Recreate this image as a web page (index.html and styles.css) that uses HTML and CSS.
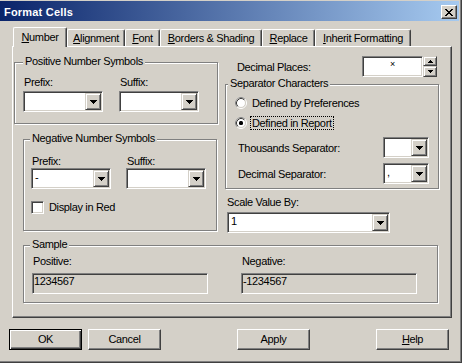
FILE: index.html
```html
<!DOCTYPE html>
<html>
<head>
<meta charset="utf-8">
<link rel="stylesheet" href="styles.css">
</head>
<body>
<div class="window">
  <div class="titlebar">
    <span class="title">Format Cells</span>
    <span class="close"><svg width="8" height="7" shape-rendering="crispEdges"><path d="M0 0h2v1H0zM6 0h2v1H6zM1 1h2v1H1zM5 1h2v1H5zM2 2h4v1H2zM3 3h2v1H3zM2 4h4v1H2zM1 5h2v1H1zM5 5h2v1H5zM0 6h2v1H0zM6 6h2v1H6z"/></svg></span>
  </div>

  <div class="tabs">
    <div class="tab sel t-num"><u>N</u>umber</div>
    <div class="tab t-align"><u>A</u>lignment</div>
    <div class="tab t-font"><u>F</u>ont</div>
    <div class="tab t-border"><u>B</u>orders &amp; Shading</div>
    <div class="tab t-replace"><u>R</u>eplace</div>
    <div class="tab t-inherit"><u>I</u>nherit Formatting</div>
  </div>

  <div class="panel">
    <div class="top">
      <div class="col-left">
        <div class="group pos">
          <div class="legend">Positive Number Symbols</div>
          <div class="fields">
            <div class="field">
              <div class="lbl">Prefix:</div>
              <div class="combo w80"><span class="val"></span><span class="drop"><svg width="7" height="4" shape-rendering="crispEdges"><path d="M0 0h7v1H0zM1 1h5v1H1zM2 2h3v1H2zM3 3h1v1H3z"/></svg></span></div>
            </div>
            <div class="field">
              <div class="lbl">Suffix:</div>
              <div class="combo w80"><span class="val"></span><span class="drop"><svg width="7" height="4" shape-rendering="crispEdges"><path d="M0 0h7v1H0zM1 1h5v1H1zM2 2h3v1H2zM3 3h1v1H3z"/></svg></span></div>
            </div>
          </div>
        </div>

        <div class="group neg">
          <div class="legend">Negative Number Symbols</div>
          <div class="fields">
            <div class="field">
              <div class="lbl">Prefix:</div>
              <div class="combo w80"><span class="val">-</span><span class="drop"><svg width="7" height="4" shape-rendering="crispEdges"><path d="M0 0h7v1H0zM1 1h5v1H1zM2 2h3v1H2zM3 3h1v1H3z"/></svg></span></div>
            </div>
            <div class="field">
              <div class="lbl">Suffix:</div>
              <div class="combo w80"><span class="val"></span><span class="drop"><svg width="7" height="4" shape-rendering="crispEdges"><path d="M0 0h7v1H0zM1 1h5v1H1zM2 2h3v1H2zM3 3h1v1H3z"/></svg></span></div>
            </div>
          </div>
          <div class="check-row"><span class="checkbox"></span><span>Display in Red</span></div>
        </div>
      </div>

      <div class="col-right">
        <div class="dec-row">
          <span>Decimal Places:</span>
          <div class="spin">
            <div class="edit-num">×</div>
            <div class="spin-btns">
              <span class="spin-btn up"><svg width="5" height="3" shape-rendering="crispEdges"><path d="M2 0h1v1H2zM1 1h3v1H1zM0 2h5v1H0z"/></svg></span>
              <span class="spin-btn down"><svg width="5" height="3" shape-rendering="crispEdges"><path d="M0 0h5v1H0zM1 1h3v1H1zM2 2h1v1H2z"/></svg></span>
            </div>
          </div>
        </div>

        <div class="group sep">
          <div class="legend">Separator Characters</div>
          <div class="radio-row first">
            <svg class="radio" width="12" height="12"><circle cx="6" cy="6" r="5.5" fill="none" stroke="#fff"/><path d="M2.11 9.89A5.5 5.5 0 0 1 9.89 2.11" fill="none" stroke="#808080"/><circle cx="6" cy="6" r="4.5" fill="#fff" stroke="#d4d0c8"/><path d="M2.82 9.18A4.5 4.5 0 0 1 9.18 2.82" fill="none" stroke="#404040"/></svg>
            <span>Defined by Preferences</span>
          </div>
          <div class="radio-row">
            <svg class="radio" width="12" height="12"><circle cx="6" cy="6" r="5.5" fill="none" stroke="#fff"/><path d="M2.11 9.89A5.5 5.5 0 0 1 9.89 2.11" fill="none" stroke="#808080"/><circle cx="6" cy="6" r="4.5" fill="#fff" stroke="#d4d0c8"/><path d="M2.82 9.18A4.5 4.5 0 0 1 9.18 2.82" fill="none" stroke="#404040"/><rect x="4" y="4" width="4" height="4" rx="1.5" fill="#000"/></svg>
            <span class="focus">Defined in Report</span>
          </div>
          <div class="sep-row r1">
            <span>Thousands Separator:</span>
            <div class="combo w46"><span class="val"></span><span class="drop"><svg width="7" height="4" shape-rendering="crispEdges"><path d="M0 0h7v1H0zM1 1h5v1H1zM2 2h3v1H2zM3 3h1v1H3z"/></svg></span></div>
          </div>
          <div class="sep-row r2">
            <span>Decimal Separator:</span>
            <div class="combo w46"><span class="val">,</span><span class="drop"><svg width="7" height="4" shape-rendering="crispEdges"><path d="M0 0h7v1H0zM1 1h5v1H1zM2 2h3v1H2zM3 3h1v1H3z"/></svg></span></div>
          </div>
        </div>

        <div class="lbl scale-lbl">Scale Value By:</div>
        <div class="combo scale-combo"><span class="val">1</span><span class="drop"><svg width="7" height="4" shape-rendering="crispEdges"><path d="M0 0h7v1H0zM1 1h5v1H1zM2 2h3v1H2zM3 3h1v1H3z"/></svg></span></div>
      </div>
    </div>

    <div class="group sample">
      <div class="legend">Sample</div>
      <div class="fields">
        <div class="field">
          <div class="lbl">Positive:</div>
          <div class="textbox">1234567</div>
        </div>
        <div class="field">
          <div class="lbl">Negative:</div>
          <div class="textbox">-1234567</div>
        </div>
      </div>
    </div>
  </div>

  <div class="buttons">
    <div class="btn default">OK</div>
    <div class="btn cancel">Cancel</div>
    <div class="btn apply">Apply</div>
    <div class="btn help"><u>H</u>elp</div>
  </div>
</div>
</body>
</html>
```

FILE: styles.css
```css
* { box-sizing: border-box; }
html, body { margin: 0; padding: 0; }
body {
  width: 462px;
  height: 363px;
  overflow: hidden;
  background: #d4d0c8;
  font-family: "Liberation Sans", Arial, sans-serif;
  font-size: 11px;
  letter-spacing: -0.35px;
  color: #000;
}
svg { display: block; }

.window {
  width: 462px;
  height: 363px;
  background: #d4d0c8;
  border-right: 1px solid #404040;
  border-bottom: 1px solid #404040;
  box-shadow: inset -1px -1px #808080;
  padding-top: 1px;
  display: flex;
  flex-direction: column;
}

.titlebar {
  height: 20px;
  margin-right: 2px;
  background: linear-gradient(to right, #0a246a, #a6caf0);
  display: flex;
  align-items: center;
  justify-content: space-between;
  padding: 0 2px 0 4px;
  color: #fff;
  font-weight: bold;
  letter-spacing: 0.2px;
}
.title { padding-top: 2px; }
.close {
  width: 16px;
  height: 14px;
  margin-top: 2px;
  background: #d4d0c8;
  border: 1px solid;
  border-color: #fff #404040 #404040 #fff;
  box-shadow: inset -1px -1px #808080;
  display: flex;
  align-items: center;
  justify-content: center;
}

.tabs {
  display: flex;
  align-items: flex-end;
  height: 19px;
  margin: 6px 0 0 13px;
}
.tab {
  height: 17px;
  background: #d4d0c8;
  border-top: 1px solid #fff;
  border-left: 1px solid #fff;
  border-right: 1px solid #404040;
  box-shadow: inset -1px 0 #808080;
  border-radius: 2px 2px 0 0;
  text-align: center;
  line-height: 16px;
  white-space: nowrap;
}
.tab.sel {
  height: 20px;
  margin-bottom: -1px;
  padding-top: 1px;
  position: relative;
  z-index: 1;
}
.t-num { width: 54px; }
.t-align { width: 58px; }
.t-font { width: 35px; }
.t-border { width: 102px; }
.t-replace { width: 53px; }
.t-inherit { width: 96px; }

.panel {
  margin-left: 12px;
  width: 440px;
  height: 272px;
  border-top: 1px solid #fff;
  border-left: 1px solid #fff;
  border-right: 1px solid #404040;
  border-bottom: 1px solid #404040;
  box-shadow: inset -1px -1px #808080;
  padding: 0 0 0 1px;
}

.top { display: flex; align-items: flex-start; }
.col-left { width: 204px; display: flex; flex-direction: column; }
.col-right { width: 214px; margin-left: 7px; display: flex; flex-direction: column; }

.group {
  border: 1px solid #808080;
  box-shadow: inset 1px 1px #fff, 1px 1px #fff;
}
.legend {
  width: fit-content;
  margin-top: -8px;
  padding: 0 2px;
  background: #d4d0c8;
  line-height: 13px;
  white-space: nowrap;
}
.lbl { line-height: 13px; padding-left: 1px; white-space: nowrap; }
.fields { display: flex; }

.pos { width: 204px; height: 62px; margin-top: 15px; padding-left: 8px; }
.pos .fields { gap: 16px; margin-top: 8px; }
.pos .combo { margin-top: 2px; }

.neg { width: 194px; height: 92px; margin: 15px 0 0 9px; padding-left: 7px; }
.neg .legend { margin-left: -1px; }
.neg .fields { gap: 15px; margin-top: 10px; }

.check-row { display: flex; align-items: center; gap: 5px; margin-top: 12px; line-height: 13px; }
.checkbox {
  width: 13px;
  height: 13px;
  background: #fff;
  border: 1px solid;
  border-color: #808080 #fff #fff #808080;
  box-shadow: inset 1px 1px #404040, inset -1px -1px #d4d0c8;
}

.combo {
  display: flex;
  height: 21px;
  background: #fff;
  border: 1px solid;
  border-color: #808080 #fff #fff #808080;
  box-shadow: inset 1px 1px #404040, inset -1px -1px #d4d0c8;
  padding: 1px;
}
.combo .val { flex: 1; padding-left: 2px; line-height: 15px; }
.combo .drop {
  flex: none;
  width: 16px;
  height: 17px;
  background: #d4d0c8;
  border: 1px solid;
  border-color: #d4d0c8 #404040 #404040 #d4d0c8;
  box-shadow: inset 1px 1px #fff, inset -1px -1px #808080;
  display: flex;
  align-items: center;
  justify-content: center;
}
.w80 { width: 80px; }
.w46 { width: 46px; }

.dec-row {
  display: flex;
  justify-content: space-between;
  align-items: center;
  width: 212px;
  margin-top: 9px;
  padding-left: 12px;
}
.spin { display: flex; }
.edit-num {
  width: 61px;
  height: 21px;
  background: #fff;
  border: 1px solid;
  border-color: #808080 #fff #fff #808080;
  box-shadow: inset 1px 1px #404040, inset -1px -1px #d4d0c8;
  text-align: center;
  font-size: 9px;
  line-height: 10px;
  padding-top: 2px;
}
.spin-btns { display: flex; flex-direction: column; width: 14px; }
.spin-btn {
  background: #d4d0c8;
  border: 1px solid;
  border-color: #d4d0c8 #404040 #404040 #d4d0c8;
  box-shadow: inset 1px 1px #fff, inset -1px -1px #808080;
  display: flex;
  align-items: center;
  justify-content: center;
}
.spin-btn.up { height: 10px; }
.spin-btn.down { height: 11px; }

.sep { width: 214px; height: 105px; margin-top: 7px; padding: 0 9px; }
.sep .legend { margin-left: -7px; }
.radio-row { display: flex; align-items: center; gap: 5px; height: 20px; line-height: 13px; }
.radio-row.first { margin-top: 3px; }
.focus {
  display: inline-block;
  line-height: 12px;
  padding: 0 1px;
  margin-left: -1px;
  outline: 1px dotted #000;
}
.sep-row { display: flex; justify-content: space-between; align-items: center; padding-left: 3px; }
.sep-row.r1 { margin-top: 4px; }
.sep-row.r2 { margin-top: 5px; }

.scale-lbl { margin-top: 7px; padding-left: 2px; }
.scale-combo { width: 163px; margin: 3px 0 0 2px; }

.sample { width: 415px; height: 58px; margin: 12px 0 0 9px; padding-left: 8px; }
.sample .legend { margin-left: -2px; }
.sample .fields { gap: 33px; margin-top: 4px; }
.textbox {
  width: 176px;
  height: 21px;
  margin-top: 5px;
  background: #d4d0c8;
  border: 1px solid;
  border-color: #808080 #fff #fff #808080;
  box-shadow: inset 1px 1px #404040, inset -1px -1px #d4d0c8;
  padding: 1px 1px;
  line-height: 13px;
}

.buttons { display: flex; margin-top: 11px; padding-left: 9px; }
.btn {
  width: 73px;
  height: 21px;
  background: #d4d0c8;
  border: 1px solid;
  border-color: #fff #404040 #404040 #fff;
  box-shadow: inset -1px -1px #808080;
  text-align: center;
  line-height: 19px;
}
.btn.default {
  border-color: #000;
  box-shadow: inset 1px 1px #fff, inset -1px -1px #404040, inset -2px -2px #808080;
}
.cancel { margin-left: 6px; }
.apply { margin-left: 76px; }
.help { margin-left: 66px; }
```
